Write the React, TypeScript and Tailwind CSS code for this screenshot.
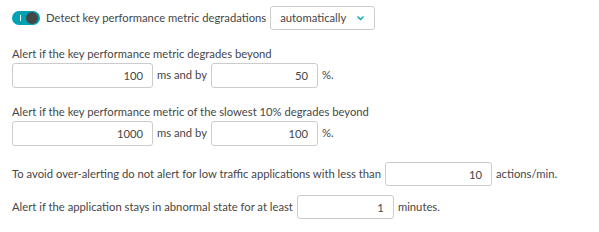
import React from 'react';

const inputCls =
  'h-[25px] border border-[#cccccc] rounded-[3px] bg-white text-right pr-[9px] text-[#454646] outline-none';

function NumInput({ value, w }: { value: string; w: string }) {
  return <input type="text" readOnly defaultValue={value} className={`${inputCls} ${w}`} />;
}

export default function App() {
  return (
    <div className="pl-3 pt-1.5 font-['Lato',sans-serif] text-[11.25px] text-[#454646]">
      <div className="flex items-center h-6">
        <div className="relative w-7 h-[14px] rounded-full bg-[#00a1b2]">
          <span className="absolute left-[8px] top-[4px] w-px h-[6px] bg-white" />
          <span className="absolute right-[2px] top-[1px] w-3 h-3 rounded-full bg-[#454646]" />
        </div>
        <span className="ml-[6px]">Detect key performance metric degradations</span>
        <div className="ml-1 h-6 w-[105px] border border-[#cccccc] rounded-[3px] flex items-center pl-[9px] pr-[9px] justify-between">
          <span>automatically</span>
          <svg width="9" height="6" viewBox="0 0 9 6" fill="none">
            <path d="M1.5 1.5 L4.5 4.5 L7.5 1.5" stroke="#00a1b2" strokeWidth="1.3" />
          </svg>
        </div>
      </div>

      <div className="mt-[16px] leading-4">Alert if the key performance metric degrades beyond</div>
      <div className="mt-[1px] flex items-center">
        <NumInput value="100" w="w-[141px]" />
        <span className="mx-1">ms and by</span>
        <NumInput value="50" w="w-[107px]" />
        <span className="ml-1">%.</span>
      </div>

      <div className="mt-[16px] leading-4">Alert if the key performance metric of the slowest 10% degrades beyond</div>
      <div className="mt-[1px] flex items-center">
        <NumInput value="1000" w="w-[141px]" />
        <span className="mx-1">ms and by</span>
        <NumInput value="100" w="w-[107px]" />
        <span className="ml-1">%.</span>
      </div>

      <div className="mt-[16px] flex items-center">
        <span className="mr-1">To avoid over-alerting do not alert for low traffic applications with less than</span>
        <NumInput value="10" w="w-[107px] !h-6" />
        <span className="ml-1">actions/min.</span>
      </div>

      <div className="mt-[9px] flex items-center">
        <span className="mr-1">Alert if the application stays in abnormal state for at least</span>
        <NumInput value="1" w="w-[97px] !h-6" />
        <span className="ml-1">minutes.</span>
      </div>
    </div>
  );
}
